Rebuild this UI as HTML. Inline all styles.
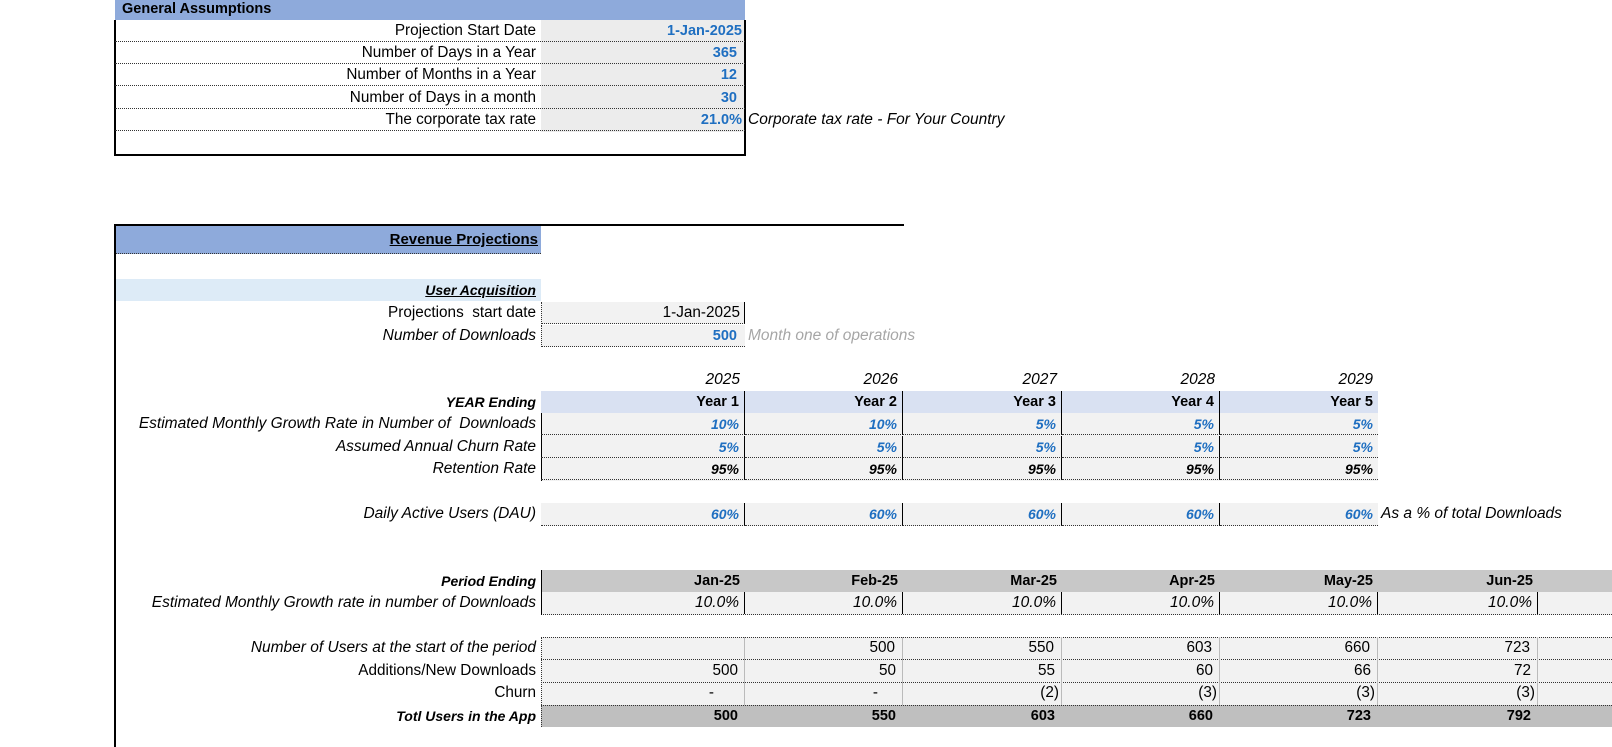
<!DOCTYPE html>
<html><head><meta charset="utf-8"><style>
body{margin:0;width:1612px;height:747px;overflow:hidden;background:#fff;font-family:"Liberation Sans",Arial,sans-serif;font-size:15.3px;color:#000;position:relative}
div{position:absolute;box-sizing:border-box;white-space:nowrap}
.c{height:22px;line-height:22px;text-align:right;padding-right:5px}
.l{left:115px;width:426px;}
.g{background:#f2f2f2}
.gd{background:#ececec}
.b{font-weight:bold;font-size:14.5px}
.i{font-style:italic;font-size:15.5px}
.b.i{font-size:14px}
.blue{color:#1f6fc1}
.db{border-bottom:1px dotted #333}
.rb{border-right:1px solid #000}
.rg{border-right:1px solid #bbb}
.c1{left:541px;width:204px}.c2{left:745px;width:158px}.c3{left:903px;width:159px}.c4{left:1062px;width:158px}.c5{left:1220px;width:158px}.c6{left:1378px;width:160px}
.n{padding-right:7px}
.p{padding-right:3px}
</style></head><body>
<!-- General assumptions -->
<div style="left:115px;top:0;width:630px;height:20px;background:#8eaadb;"></div>
<div class="b" style="left:122px;top:0;height:20px;line-height:19px;font-size:14.5px">General Assumptions</div>
<div style="left:114px;top:20px;width:632px;height:136px;border:2px solid #000;border-top:none"></div>
<div class="gd" style="left:541px;top:20px;width:203px;height:112px"></div>
<div class="c l db" style="top:20px;width:630px"></div>
<div class="c l db" style="top:42px;width:630px"></div>
<div class="c l db" style="top:64px;width:630px"></div>
<div class="c l db" style="top:87px;width:630px"></div>
<div class="c l db" style="top:109px;width:630px"></div>
<div class="c l" style="top:20px">Projection Start Date</div>
<div class="c l" style="top:42px">Number of Days in a Year</div>
<div class="c l" style="top:64px">Number of Months in a Year</div>
<div class="c l" style="top:87px">Number of Days in a month</div>
<div class="c l" style="top:109px">The corporate tax rate</div>
<div class="c c1 b blue" style="top:20px;padding-right:3px">1-Jan-2025</div>
<div class="c c1 b blue" style="top:42px;padding-right:8px">365</div>
<div class="c c1 b blue" style="top:64px;padding-right:8px">12</div>
<div class="c c1 b blue" style="top:87px;padding-right:8px">30</div>
<div class="c c1 b blue" style="top:109px;padding-right:3px">21.0%</div>
<div class="c i" style="left:748px;top:109px">Corporate tax rate - For Your Country</div>

<!-- Revenue -->
<div style="left:114px;top:224px;width:790px;height:2px;background:#000"></div>
<div style="left:114px;top:224px;width:2px;height:523px;background:#000"></div>
<div class="db" style="left:116px;top:226px;width:425px;height:28px;background:#8eaadb"></div>
<div class="b" style="left:116px;top:229px;width:422px;text-align:right;text-decoration:underline;height:22px;line-height:22px;font-size:15px">Revenue Projections</div>
<div class="c l b i" style="top:279px;left:116px;width:425px;background:#ddebf7;text-decoration:underline">User Acquisition</div>
<div class="c l" style="top:302px">Projections&nbsp; start date</div>
<div class="c l i" style="top:325px">Number of Downloads</div>
<div class="c c1 g rb" style="top:302px;border-left:1px dotted #333;border-bottom:1px dotted #333;padding-right:4px">1-Jan-2025</div>
<div class="c c1 g b blue" style="top:325px;border-left:1px dotted #333;border-bottom:1px dotted #333;padding-right:8px">500</div>
<div class="c i" style="left:748px;top:325px;color:#a6a6a6">Month one of operations</div>

<!-- years -->
<div class="c c1 i" style="top:369px">2025</div>
<div class="c c2 i" style="top:369px">2026</div>
<div class="c c3 i" style="top:369px">2027</div>
<div class="c c4 i" style="top:369px">2028</div>
<div class="c c5 i" style="top:369px">2029</div>
<div class="c l b i" style="top:391px">YEAR Ending</div>
<div style="left:541px;top:391px;width:837px;height:22px;background:#d9e1f2"></div>
<div class="c c1 b rb" style="top:391px">Year 1</div>
<div class="c c2 b rb" style="top:391px">Year 2</div>
<div class="c c3 b rb" style="top:391px">Year 3</div>
<div class="c c4 b rb" style="top:391px">Year 4</div>
<div class="c c5 b" style="top:391px">Year 5</div>
<div style="left:541px;top:413px;width:837px;height:68px;background:#f2f2f2"></div>
<div class="c l i" style="top:413px">Estimated Monthly Growth Rate in Number of&nbsp; Downloads</div>
<div class="c l i" style="top:436px">Assumed Annual Churn Rate</div>
<div class="c l i" style="top:458px">Retention Rate</div>
<div style="left:541px;top:413px;width:1px;height:68px;background:#000"></div>
<div class="c c1 i b blue rb db" style="top:413px">10%</div><div class="c c2 i b blue rb db" style="top:413px">10%</div><div class="c c3 i b blue rb db" style="top:413px">5%</div><div class="c c4 i b blue rb db" style="top:413px">5%</div><div class="c c5 i b blue db" style="top:413px">5%</div>
<div class="c c1 i b blue rb db" style="top:436px">5%</div><div class="c c2 i b blue rb db" style="top:436px">5%</div><div class="c c3 i b blue rb db" style="top:436px">5%</div><div class="c c4 i b blue rb db" style="top:436px">5%</div><div class="c c5 i b blue db" style="top:436px">5%</div>
<div class="c c1 i b rb db" style="top:458px">95%</div><div class="c c2 i b rb db" style="top:458px">95%</div><div class="c c3 i b rb db" style="top:458px">95%</div><div class="c c4 i b rb db" style="top:458px">95%</div><div class="c c5 i b db" style="top:458px">95%</div>

<div class="c l i" style="top:503px">Daily Active Users (DAU)</div>
<div style="left:541px;top:503px;width:1px;height:23px;background:#000"></div>
<div class="c c1 g i b blue rb db" style="top:503px;height:23px">60%</div><div class="c c2 g i b blue rb db" style="top:503px;height:23px">60%</div><div class="c c3 g i b blue rb db" style="top:503px;height:23px">60%</div><div class="c c4 g i b blue rb db" style="top:503px;height:23px">60%</div><div class="c c5 g i b blue db" style="top:503px;height:23px">60%</div>
<div class="c i" style="left:1381px;top:503px">As a % of total Downloads</div>

<!-- monthly -->
<div class="c l b i" style="top:570px">Period Ending</div>
<div style="left:541px;top:570px;width:1071px;height:22px;background:#c8c8c8"></div>
<div style="left:541px;top:592px;width:1071px;height:23px;background:#f2f2f2;border-bottom:1px dotted #333"></div>
<div style="left:541px;top:570px;width:1px;height:45px;background:#000"></div>
<div class="c c1 b" style="top:570px">Jan-25</div><div class="c c2 b" style="top:570px">Feb-25</div><div class="c c3 b" style="top:570px">Mar-25</div><div class="c c4 b" style="top:570px">Apr-25</div><div class="c c5 b" style="top:570px">May-25</div><div class="c c6 b" style="top:570px">Jun-25</div>
<div class="c l i" style="top:592px">Estimated Monthly Growth rate in number of Downloads</div>
<div class="c c1 i rb" style="top:592px">10.0%</div><div class="c c2 i rb" style="top:592px">10.0%</div><div class="c c3 i rb" style="top:592px">10.0%</div><div class="c c4 i rb" style="top:592px">10.0%</div><div class="c c5 i rb" style="top:592px">10.0%</div><div class="c c6 i rb" style="top:592px">10.0%</div>

<div style="left:541px;top:637px;width:1071px;height:68px;background:#f2f2f2;border-top:1px dotted #333;border-left:1px dotted #333"></div>
<div style="left:541px;top:659px;width:1071px;height:1px;border-top:1px dotted #333"></div>
<div style="left:541px;top:682px;width:1071px;height:1px;border-top:1px dotted #333"></div>
<div class="c l i" style="top:637px">Number of Users at the start of the period</div>
<div class="c l" style="top:660px">Additions/New Downloads</div>
<div class="c l" style="top:682px">Churn</div>
<div class="c l b i" style="top:705px">Totl Users in the App</div>
<div class="c c1 rg n" style="top:637px;height:68px"></div>
<div class="c c2 rg n" style="top:637px">500</div><div class="c c3 rg n" style="top:637px">550</div><div class="c c4 rg n" style="top:637px">603</div><div class="c c5 rg n" style="top:637px">660</div><div class="c c6 rg n" style="top:637px">723</div>
<div class="c c2 rg" style="top:659px;height:46px"></div><div class="c c3 rg" style="top:659px;height:46px"></div><div class="c c4 rg" style="top:659px;height:46px"></div><div class="c c5 rg" style="top:659px;height:46px"></div><div class="c c6 rg" style="top:659px;height:46px"></div>
<div class="c c1 n" style="top:660px">500</div><div class="c c2 n" style="top:660px">50</div><div class="c c3 n" style="top:660px">55</div><div class="c c4 n" style="top:660px">60</div><div class="c c5 n" style="top:660px">66</div><div class="c c6 n" style="top:660px">72</div>
<div class="c c1" style="top:682px;padding-right:31px">-</div><div class="c c2" style="top:682px;padding-right:25px">-</div><div class="c c3 p" style="top:682px">(2)</div><div class="c c4 p" style="top:682px">(3)</div><div class="c c5 p" style="top:682px">(3)</div><div class="c c6 p" style="top:682px">(3)</div>
<div style="left:541px;top:705px;width:1071px;height:22px;background:#bfbfbf;border-top:1px dotted #333;border-left:1px dotted #333"></div>
<div class="c c1 b n" style="top:705px">500</div><div class="c c2 b n" style="top:705px">550</div><div class="c c3 b n" style="top:705px">603</div><div class="c c4 b n" style="top:705px">660</div><div class="c c5 b n" style="top:705px">723</div><div class="c c6 b n" style="top:705px">792</div>
</body></html>
